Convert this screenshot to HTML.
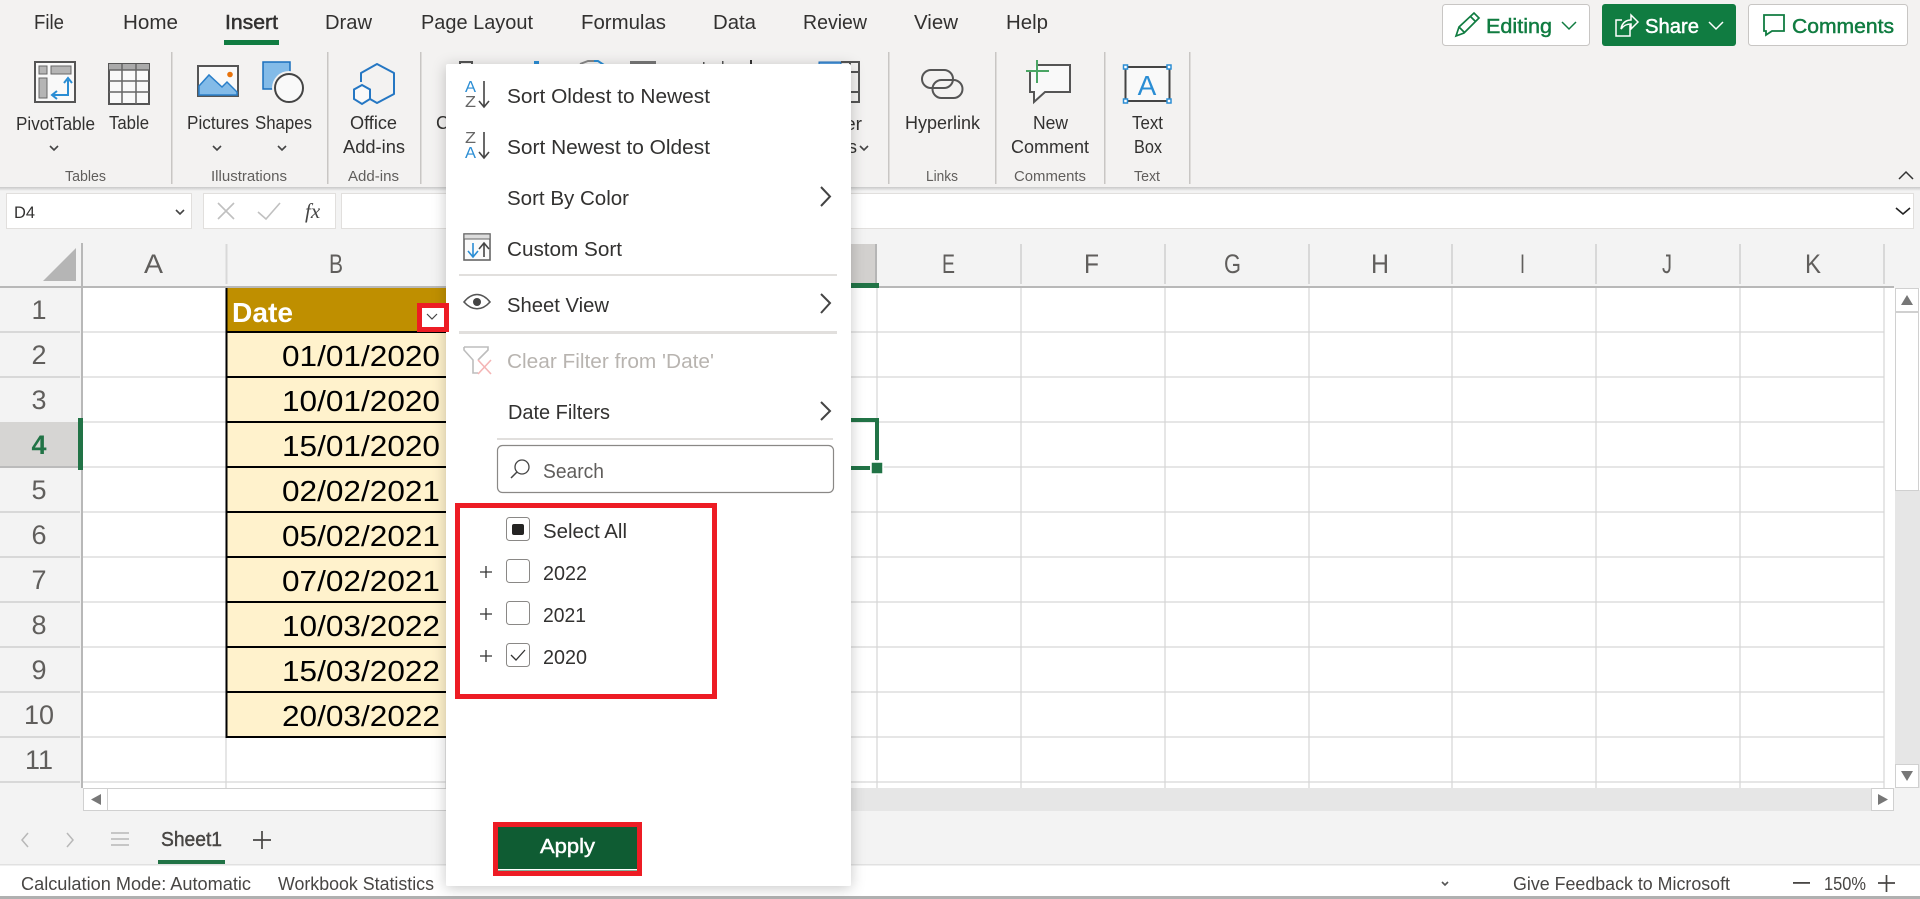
<!DOCTYPE html>
<html><head><meta charset="utf-8"><title>Excel</title>
<style>
html,body{margin:0;padding:0;width:1920px;height:899px;overflow:hidden;background:#f3f3f3}
svg{display:block;font-family:"Liberation Sans",sans-serif}
.t{font-size:20px;fill:#323130}
.r{font-size:18px;fill:#323130}
.g{font-size:15px;fill:#605e5c}
.m{font-size:20px;fill:#323130}
.h{font-size:27px;fill:#605e5c}
.d{font-size:29px;fill:#000}
.s{font-size:18px;fill:#484644}
.i{fill:none;stroke:#444;stroke-width:2}
</style></head><body>
<svg width="1920" height="899" viewBox="0 0 1920 899" xmlns="http://www.w3.org/2000/svg">
<defs>
<filter id="sh" x="-10%" y="-5%" width="120%" height="110%"><feDropShadow dx="0" dy="2" stdDeviation="7" flood-color="#000" flood-opacity=".22"/></filter>
<linearGradient id="rs" x1="0" y1="0" x2="0" y2="1"><stop offset="0" stop-color="#c9c9c9"/><stop offset="1" stop-color="#f3f3f3"/></linearGradient>
</defs>
<!-- ribbon -->
<rect width="1920" height="899" fill="#f3f3f3"/>
<rect width="1920" height="187" fill="#f3f2f1"/>
<rect y="187" width="1920" height="4" fill="url(#rs)"/>
<text class="t" x="34" y="29" textLength="30" lengthAdjust="spacingAndGlyphs">File</text>
<text class="t" x="123" y="29" textLength="55" lengthAdjust="spacingAndGlyphs">Home</text>
<text class="t" x="225" y="29" textLength="53" lengthAdjust="spacingAndGlyphs" stroke="#323130" stroke-width=".5">Insert</text>
<text class="t" x="325" y="29" textLength="47" lengthAdjust="spacingAndGlyphs">Draw</text>
<text class="t" x="421" y="29" textLength="112" lengthAdjust="spacingAndGlyphs">Page Layout</text>
<text class="t" x="581" y="29" textLength="85" lengthAdjust="spacingAndGlyphs">Formulas</text>
<text class="t" x="713" y="29" textLength="43" lengthAdjust="spacingAndGlyphs">Data</text>
<text class="t" x="803" y="29" textLength="64" lengthAdjust="spacingAndGlyphs">Review</text>
<text class="t" x="914" y="29" textLength="44" lengthAdjust="spacingAndGlyphs">View</text>
<text class="t" x="1006" y="29" textLength="42" lengthAdjust="spacingAndGlyphs">Help</text>
<rect x="224" y="40" width="55" height="5" fill="#107c41"/>
<!-- separators -->
<g fill="#c8c6c4"><rect x="171" y="52" width="1.5" height="132"/><rect x="327" y="52" width="1.5" height="132"/><rect x="420" y="52" width="1.5" height="132"/><rect x="888" y="52" width="1.5" height="132"/><rect x="995" y="52" width="1.5" height="132"/><rect x="1104" y="52" width="1.5" height="132"/><rect x="1189" y="52" width="1.5" height="132"/></g>
<!-- pivot icon -->
<rect x="35" y="62" width="40" height="40" fill="#f9f9f9" stroke="#555" stroke-width="2"/>
<g fill="#b5b5b5" stroke="#666"><rect x="39" y="66" width="8" height="8"/><rect x="51" y="66" width="20" height="8"/><rect x="39" y="78" width="8" height="20"/></g>
<path d="M68 80V95H53M64 83l4-5 4 5M57 91l-5 4 5 4" fill="none" stroke="#2a8dd4" stroke-width="2"/>
<text class="r" x="16" y="130" textLength="79" lengthAdjust="spacingAndGlyphs">PivotTable</text>
<path d="M50 146l4 4 4-4" fill="none" stroke="#444" stroke-width="1.6"/>
<!-- table icon -->
<rect x="109" y="64" width="40" height="40" fill="#f9f9f9" stroke="#555" stroke-width="2"/>
<rect x="109" y="64" width="40" height="6" fill="#aaa"/>
<path d="M122 64V104M136 64V104M109 70H149M109 81H149M109 92H149" stroke="#666" stroke-width="1.5"/>
<text class="r" x="109" y="129" textLength="40" lengthAdjust="spacingAndGlyphs">Table</text>
<text class="g" x="65" y="181" textLength="41" lengthAdjust="spacingAndGlyphs">Tables</text>
<!-- pictures icon -->
<rect x="198" y="66" width="40" height="30" fill="#f9f9f9" stroke="#555" stroke-width="2"/>
<path d="M199 86L209 75L222 87L227 82L237 92V95H199Z" fill="#83bbe8" stroke="#2a7fc9" stroke-width="1.5"/>
<circle cx="230" cy="74.500" r="2.800" fill="#e8730c"/>
<text class="r" x="187" y="129" textLength="62" lengthAdjust="spacingAndGlyphs">Pictures</text>
<path d="M213 146l4 4 4-4" fill="none" stroke="#444" stroke-width="1.6"/>
<!-- shapes icon -->
<rect x="263" y="62" width="27" height="27" fill="#83bbe8" stroke="#1a6fbe" stroke-width="1.5"/>
<circle cx="289" cy="88" r="17" fill="#f3f2f1"/>
<circle cx="289" cy="88" r="14" fill="#f9f9f9" stroke="#444" stroke-width="2"/>
<text class="r" x="255" y="129" textLength="57" lengthAdjust="spacingAndGlyphs">Shapes</text>
<path d="M278 146l4 4 4-4" fill="none" stroke="#444" stroke-width="1.6"/>
<text class="g" x="211" y="181" textLength="76" lengthAdjust="spacingAndGlyphs">Illustrations</text>
<!-- office add-ins -->
<path d="M361 82V73L377 64L394 73V94L377 103L370 99" fill="none" stroke="#2577c3" stroke-width="2" stroke-linejoin="round"/>
<path d="M362 85L370 89.500V99L362 104L354 99V89.500Z" fill="#f9f9f9" stroke="#2577c3" stroke-width="2"/>
<text class="r" x="350" y="129" textLength="47" lengthAdjust="spacingAndGlyphs">Office</text>
<text class="r" x="343" y="153" textLength="62" lengthAdjust="spacingAndGlyphs">Add-ins</text>
<text class="g" x="348" y="181" textLength="51" lengthAdjust="spacingAndGlyphs">Add-ins</text>
<text class="r" x="436" y="129">C</text>
<!-- peeking icons -->
<path d="M460 64V62H472V64" fill="none" stroke="#555" stroke-width="2"/>
<rect x="534" y="61" width="5" height="4" fill="#2a8dd4"/>
<path d="M580 64l8-3h6" fill="none" stroke="#888" stroke-width="2"/><path d="M594 61h4l6 4" fill="none" stroke="#2a8dd4" stroke-width="2"/>
<rect x="630" y="61" width="26" height="3" fill="#777"/><rect x="703" y="62" width="1.500" height="3" fill="#555"/><rect x="722" y="61" width="1.500" height="4" fill="#555"/><rect x="750" y="60" width="2" height="5" fill="#333"/>
<rect x="819" y="62" width="22" height="5" fill="#5da4e4" stroke="#1a6fbe"/>
<path d="M841 62H859V102H845M850 62V102M850 92H859M850 72H859" fill="none" stroke="#555" stroke-width="2"/>
<text class="r" x="845" y="130" textLength="17" lengthAdjust="spacingAndGlyphs">er</text>
<text class="r" x="848" y="153">s</text>
<path d="M860 146l4 4 4-4" fill="none" stroke="#444" stroke-width="1.6"/>
<!-- hyperlink -->
<rect x="922" y="70" width="31" height="18" rx="9" fill="none" stroke="#555" stroke-width="2"/>
<rect x="932.500" y="80" width="30" height="18" rx="9" fill="none" stroke="#555" stroke-width="2"/>
<text class="r" x="905" y="129" textLength="75" lengthAdjust="spacingAndGlyphs">Hyperlink</text>
<text class="g" x="926" y="181" textLength="32" lengthAdjust="spacingAndGlyphs">Links</text>
<!-- new comment -->
<path d="M1036 65H1070V92H1045L1034 102V92H1030V72" fill="#f9f9f9" stroke="#555" stroke-width="2"/>
<path d="M1026 71H1049M1037 60V83" stroke="#4aa564" stroke-width="2"/>
<text class="r" x="1033" y="129" textLength="35" lengthAdjust="spacingAndGlyphs">New</text>
<text class="r" x="1011" y="153" textLength="78" lengthAdjust="spacingAndGlyphs">Comment</text>
<text class="g" x="1014" y="181" textLength="72" lengthAdjust="spacingAndGlyphs">Comments</text>
<!-- textbox -->
<rect x="1125.500" y="67" width="44" height="34" fill="#f9f9f9" stroke="#444" stroke-width="2"/>
<g fill="#fff" stroke="#2a8dd4" stroke-width="1.500"><rect x="1123.500" y="65" width="4" height="4"/><rect x="1167" y="65" width="4" height="4"/><rect x="1123.500" y="99" width="4" height="4"/><rect x="1167" y="99" width="4" height="4"/></g>
<text x="1147" y="95" text-anchor="middle" font-size="28" fill="#2a8dd4">A</text>
<text class="r" x="1132" y="129" textLength="31" lengthAdjust="spacingAndGlyphs">Text</text>
<text class="r" x="1134" y="153" textLength="28" lengthAdjust="spacingAndGlyphs">Box</text>
<text class="g" x="1134" y="181" textLength="26" lengthAdjust="spacingAndGlyphs">Text</text>
<!-- top-right buttons -->
<rect x="1442.500" y="4.500" width="147" height="41" rx="3" fill="#fff" stroke="#c8c6c4"/>
<path d="M1456 36l3-9 15-14 5 5-15 15zM1459 27l6 6M1470 16l5 5" fill="none" stroke="#107c41" stroke-width="1.700"/>
<text x="1486" y="33" font-size="20" fill="#107c41" stroke="#107c41" stroke-width=".45" textLength="66" lengthAdjust="spacingAndGlyphs">Editing</text>
<path d="M1562 22l7 7 7-7" fill="none" stroke="#107c41" stroke-width="1.500"/>
<rect x="1602" y="4" width="134" height="42" rx="3" fill="#107c41"/>
<path d="M1630 25V36H1616V20H1622M1621 29c1-7 6-9 10-9V15l7 7-7 7v-5c-4 0-7 1-10 5z" fill="none" stroke="#fff" stroke-width="1.500"/>
<text x="1645" y="33" font-size="20" fill="#fff" stroke="#fff" stroke-width=".45" textLength="54" lengthAdjust="spacingAndGlyphs">Share</text>
<path d="M1709 22l7 7 7-7" fill="none" stroke="#fff" stroke-width="1.500"/>
<rect x="1748.500" y="4.500" width="159" height="41" rx="3" fill="#fff" stroke="#c8c6c4"/>
<path d="M1764 15H1784V31H1772L1766 35V31H1764Z" fill="none" stroke="#107c41" stroke-width="1.800"/>
<text x="1792" y="33" font-size="20" fill="#107c41" stroke="#107c41" stroke-width=".45" textLength="102" lengthAdjust="spacingAndGlyphs">Comments</text>
<path d="M1899 179l7-7 7 7" fill="none" stroke="#333" stroke-width="1.500"/>
<!-- formula bar -->
<g fill="#fff" stroke="#e1dfdd" stroke-width="1"><rect x="6.500" y="193.500" width="185" height="35"/><rect x="203.500" y="193.500" width="132" height="35"/><rect x="341.500" y="193.500" width="1572" height="35"/></g>
<text x="14" y="218" font-size="17" fill="#323130" textLength="21" lengthAdjust="spacingAndGlyphs">D4</text>
<path d="M176 210l4 4 4-4" fill="none" stroke="#444" stroke-width="1.600"/>
<path d="M218 203L234 219M234 203L218 219" stroke="#c0c0c0" stroke-width="1.600"/>
<path d="M258 212L266 219L280 203" fill="none" stroke="#c0c0c0" stroke-width="1.600"/>
<text x="305" y="218" font-family="Liberation Serif,serif" font-style="italic" font-size="21" fill="#444">fx</text>
<path d="M1896 208l7 6 7-6" fill="none" stroke="#222" stroke-width="1.600"/>
<!-- grid -->
<rect x="83" y="288" width="1811" height="500" fill="#fff"/>
<g stroke="#d6d6d6" stroke-width="1.200" fill="none">
<path d="M83 332H1884M83 377H1884M83 422H1884M83 467H1884M83 512H1884M83 557H1884M83 602H1884M83 647H1884M83 692H1884M83 737H1884M83 782H1884"/>
<path d="M226 288V788M446 288V788M733 288V788M877 288V788M1021 288V788M1165 288V788M1309 288V788M1452 288V788M1596 288V788M1740 288V788M1884 288V788"/>
</g>
<!-- col hdr -->
<rect x="0" y="286" width="1894" height="2" fill="#b8b8b8"/>
<rect x="0" y="288" width="81" height="500" fill="#f3f3f3"/>
<rect x="81" y="243" width="2" height="545" fill="#b8b8b8"/>
<path d="M43 281H76V248Z" fill="#b5b5b5"/>
<g fill="#d8d8d8"><rect x="225.500" y="244" width="2" height="40"/><rect x="1020" y="244" width="2" height="40"/><rect x="1164" y="244" width="2" height="40"/><rect x="1308" y="244" width="2" height="40"/><rect x="1451" y="244" width="2" height="40"/><rect x="1595" y="244" width="2" height="40"/><rect x="1739" y="244" width="2" height="40"/><rect x="1883" y="244" width="2" height="40"/></g>
<text class="h" x="144" y="273" textLength="19" lengthAdjust="spacingAndGlyphs">A</text>
<text class="h" x="329" y="273" textLength="14" lengthAdjust="spacingAndGlyphs">B</text>
<text class="h" x="942" y="273" textLength="13" lengthAdjust="spacingAndGlyphs">E</text>
<text class="h" x="1084" y="273" textLength="15" lengthAdjust="spacingAndGlyphs">F</text>
<text class="h" x="1224" y="273" textLength="17" lengthAdjust="spacingAndGlyphs">G</text>
<text class="h" x="1371" y="273" textLength="18" lengthAdjust="spacingAndGlyphs">H</text>
<text class="h" x="1520" y="273" textLength="5" lengthAdjust="spacingAndGlyphs">I</text>
<text class="h" x="1662" y="273" textLength="10" lengthAdjust="spacingAndGlyphs">J</text>
<text class="h" x="1805" y="273" textLength="16" lengthAdjust="spacingAndGlyphs">K</text>
<!-- row hdr -->
<g fill="#d8d8d8"><rect y="331" width="80" height="2"/><rect y="376" width="80" height="2"/><rect y="511" width="80" height="2"/><rect y="556" width="80" height="2"/><rect y="601" width="80" height="2"/><rect y="646" width="80" height="2"/><rect y="691" width="80" height="2"/><rect y="736" width="80" height="2"/><rect y="781" width="80" height="2"/></g>
<rect y="422" width="81" height="45" fill="#d6d5d3"/><rect y="466" width="81" height="2" fill="#bbb"/>
<g class="h" text-anchor="middle" font-size="27" fill="#605e5c">
<text x="39" y="319">1</text><text x="39" y="364">2</text><text x="39" y="409">3</text><text x="39" y="499">5</text><text x="39" y="544">6</text><text x="39" y="589">7</text><text x="39" y="634">8</text><text x="39" y="679">9</text><text x="39" y="724">10</text><text x="39" y="769">11</text>
</g>
<text x="39" y="454" text-anchor="middle" font-size="27" font-weight="bold" fill="#217346">4</text>
<rect x="78" y="418" width="5" height="52" fill="#217346"/>
<!-- table -->
<rect x="226" y="288" width="225" height="44" fill="#bf8f00"/>
<rect x="226" y="333" width="225" height="405" fill="#fff2cc"/>
<g fill="#000"><rect x="225.500" y="288" width="2" height="450"/>
<rect x="226" y="331" width="225" height="2"/><rect x="226" y="376" width="225" height="2"/><rect x="226" y="421" width="225" height="2"/><rect x="226" y="466" width="225" height="2"/><rect x="226" y="511" width="225" height="2"/><rect x="226" y="556" width="225" height="2"/><rect x="226" y="601" width="225" height="2"/><rect x="226" y="646" width="225" height="2"/><rect x="226" y="691" width="225" height="2"/><rect x="226" y="736" width="225" height="2"/></g>
<text x="232" y="322" font-size="28" font-weight="bold" fill="#fff" textLength="61" lengthAdjust="spacingAndGlyphs">Date</text>
<text class="d" x="282" y="366" textLength="158" lengthAdjust="spacingAndGlyphs">01/01/2020</text>
<text class="d" x="282" y="411" textLength="158" lengthAdjust="spacingAndGlyphs">10/01/2020</text>
<text class="d" x="282" y="456" textLength="158" lengthAdjust="spacingAndGlyphs">15/01/2020</text>
<text class="d" x="282" y="501" textLength="158" lengthAdjust="spacingAndGlyphs">02/02/2021</text>
<text class="d" x="282" y="546" textLength="158" lengthAdjust="spacingAndGlyphs">05/02/2021</text>
<text class="d" x="282" y="591" textLength="158" lengthAdjust="spacingAndGlyphs">07/02/2021</text>
<text class="d" x="282" y="636" textLength="158" lengthAdjust="spacingAndGlyphs">10/03/2022</text>
<text class="d" x="282" y="681" textLength="158" lengthAdjust="spacingAndGlyphs">15/03/2022</text>
<text class="d" x="282" y="726" textLength="158" lengthAdjust="spacingAndGlyphs">20/03/2022</text>
<!-- D selection -->
<rect x="733" y="244" width="144" height="41" fill="#d2d0ce"/><rect x="875" y="244" width="2" height="41" fill="#b5b5b5"/><rect x="733" y="283" width="146" height="5" fill="#217346"/>
<path d="M733 420H877V460M733 468H870" fill="none" stroke="#217346" stroke-width="4"/>
<rect x="871" y="462" width="12" height="12" fill="#217346" stroke="#fff" stroke-width="1.500"/>
<!-- scrollbars -->
<rect x="1894" y="288" width="26" height="500" fill="#fff"/>
<rect x="1895" y="490" width="25" height="298" fill="#e6e6e6"/>
<rect x="1895.500" y="288.500" width="23" height="23" fill="#fff" stroke="#d0d0d0"/>
<rect x="1895.500" y="312.500" width="23" height="178" fill="#fff" stroke="#d0d0d0"/>
<path d="M1901 305H1913L1907 295Z" fill="#777"/>
<rect x="1895.500" y="764.500" width="23" height="23" fill="#fff" stroke="#d0d0d0"/>
<path d="M1901 771H1913L1907 781Z" fill="#777"/>
<rect x="83" y="788" width="1811" height="23" fill="#e6e6e6"/>
<rect x="83.500" y="788.500" width="760" height="22" fill="#fff" stroke="#d0d0d0"/>
<rect x="83.500" y="788.500" width="24" height="22" fill="#fff" stroke="#d0d0d0"/>
<path d="M101 794V805L91 799.500Z" fill="#777"/>
<rect x="1871.500" y="788.500" width="22" height="22" fill="#fff" stroke="#d0d0d0"/>
<path d="M1878 794V805L1888 799.500Z" fill="#777"/>
<!-- tabs -->
<path d="M28 833L22 840L28 847M67 833L73 840L67 847" fill="none" stroke="#b8b8b8" stroke-width="1.500"/>
<path d="M111 833H129M111 839H129M111 845H129" stroke="#b8b8b8" stroke-width="1.500"/>
<text x="161" y="846" font-size="20" fill="#484644" stroke="#484644" stroke-width=".45" textLength="61" lengthAdjust="spacingAndGlyphs">Sheet1</text>
<rect x="158" y="860" width="67" height="4" fill="#217346"/>
<path d="M253 840H271M262 831V849" stroke="#484644" stroke-width="1.700"/>
<!-- status -->
<rect y="864" width="1920" height="32" fill="#fff"/><rect y="864" width="1920" height="1.500" fill="#e1e1e1"/>
<rect y="896" width="1920" height="3" fill="#b0b0b0"/>
<text class="s" x="21" y="890" textLength="230" lengthAdjust="spacingAndGlyphs">Calculation Mode: Automatic</text>
<text class="s" x="278" y="890" textLength="156" lengthAdjust="spacingAndGlyphs">Workbook Statistics</text>
<path d="M1442 882l3 3 3-3" fill="none" stroke="#555" stroke-width="1.600"/>
<text class="s" x="1513" y="890" textLength="217" lengthAdjust="spacingAndGlyphs">Give Feedback to Microsoft</text>
<rect x="1793" y="882" width="17" height="1.800" fill="#484644"/>
<text class="s" x="1824" y="890" textLength="42" lengthAdjust="spacingAndGlyphs">150%</text>
<path d="M1878 883H1895M1886.500 875V892" stroke="#484644" stroke-width="1.700"/>
<!-- menu -->
<rect x="446" y="64" width="405" height="822" rx="2" fill="#fff" filter="url(#sh)"/>
<text x="465" y="92" font-size="16" fill="#2a8dd4" textLength="11" lengthAdjust="spacingAndGlyphs">A</text>
<text x="465" y="107" font-size="16" fill="#666" textLength="11" lengthAdjust="spacingAndGlyphs">Z</text>
<path d="M484 81V107M479 101L484 107L489 101" fill="none" stroke="#444" stroke-width="1.600"/>
<text class="m" x="507" y="103" textLength="203" lengthAdjust="spacingAndGlyphs">Sort Oldest to Newest</text>
<text x="465" y="143" font-size="16" fill="#666" textLength="11" lengthAdjust="spacingAndGlyphs">Z</text>
<text x="465" y="158" font-size="16" fill="#2a8dd4" textLength="11" lengthAdjust="spacingAndGlyphs">A</text>
<path d="M484 132V158M479 152L484 158L489 152" fill="none" stroke="#444" stroke-width="1.600"/>
<text class="m" x="507" y="154" textLength="203" lengthAdjust="spacingAndGlyphs">Sort Newest to Oldest</text>
<text class="m" x="507" y="205" textLength="122" lengthAdjust="spacingAndGlyphs">Sort By Color</text>
<path d="M821 187L830 196.500L821 206" fill="none" stroke="#444" stroke-width="2"/>
<rect x="464" y="234" width="26" height="26" fill="#fafafa" stroke="#666" stroke-width="1.600"/><rect x="464" y="234" width="26" height="5" fill="#ddd" stroke="#666"/>
<path d="M473 243V256M468 251L473 257L478 251" fill="none" stroke="#2a8dd4" stroke-width="1.600"/>
<path d="M484 257V243M479 249L484 243L489 249" fill="none" stroke="#444" stroke-width="1.600"/>
<text class="m" x="507" y="256" textLength="115" lengthAdjust="spacingAndGlyphs">Custom Sort</text>
<rect x="459" y="274" width="378" height="2" fill="#e1dfdd"/>
<path d="M464 302C472 292 482 292 490 302C482 311 472 311 464 302Z" fill="none" stroke="#555" stroke-width="1.600"/>
<circle cx="477" cy="302" r="4" fill="#444"/>
<text class="m" x="507" y="312" textLength="102" lengthAdjust="spacingAndGlyphs">Sheet View</text>
<path d="M821 294L830 303L821 313" fill="none" stroke="#444" stroke-width="2"/>
<rect x="459" y="331" width="378" height="3" fill="#e1dfdd"/>
<path d="M464 347H488V350L478 360M464 347V350L473 360V373H478" fill="none" stroke="#bdbdbd" stroke-width="1.600"/>
<path d="M478 360L491 374M491 360L478 374" stroke="#f4b5b5" stroke-width="1.600"/>
<text x="507" y="368" font-size="20" fill="#b8b4b0" textLength="207" lengthAdjust="spacingAndGlyphs">Clear Filter from 'Date'</text>
<text class="m" x="508" y="419" textLength="102" lengthAdjust="spacingAndGlyphs">Date Filters</text>
<path d="M821 402L830 411L821 420" fill="none" stroke="#444" stroke-width="2"/>
<rect x="497" y="438" width="336" height="2" fill="#e1dfdd"/>
<rect x="497.500" y="445.500" width="336" height="47" rx="5" fill="#fff" stroke="#8a8886" stroke-width="1.200"/>
<circle cx="522" cy="467" r="7" fill="none" stroke="#444" stroke-width="1.300"/><path d="M517 472L511 478" stroke="#444" stroke-width="1.500"/>
<text x="543" y="478" font-size="20" fill="#605e5c" textLength="61" lengthAdjust="spacingAndGlyphs">Search</text>
<g fill="#fff" stroke="#8a8886" stroke-width="1"><rect x="506.500" y="517.500" width="23" height="23" rx="3"/><rect x="506.500" y="559.500" width="23" height="23" rx="3"/><rect x="506.500" y="601.500" width="23" height="23" rx="3"/><rect x="506.500" y="643.500" width="23" height="23" rx="3"/></g>
<rect x="512" y="524" width="12" height="11" rx="2" fill="#252423"/>
<path d="M511 655L516 660L525 650" fill="none" stroke="#333" stroke-width="1.300"/>
<path d="M480 572H492M486 566V578M480 614H492M486 608V620M480 656H492M486 650V662" stroke="#333" stroke-width="1.300"/>
<text class="m" x="543" y="538" textLength="84" lengthAdjust="spacingAndGlyphs">Select All</text>
<text class="m" x="543" y="580" textLength="44" lengthAdjust="spacingAndGlyphs">2022</text>
<text class="m" x="543" y="622" textLength="43" lengthAdjust="spacingAndGlyphs">2021</text>
<text class="m" x="543" y="664" textLength="44" lengthAdjust="spacingAndGlyphs">2020</text>
<!-- red boxes -->
<rect x="419.500" y="305.500" width="27" height="24" fill="#fff" stroke="#ed1c24" stroke-width="5"/>
<path d="M427 314l5 5 5-5" fill="none" stroke="#444" stroke-width="1.200"/>
<rect x="457.500" y="505.500" width="257" height="191" fill="none" stroke="#ed1c24" stroke-width="5"/>
<rect x="495.500" y="824.500" width="144" height="49" fill="#0f5c33" stroke="#ed1c24" stroke-width="5"/>
<rect x="498" y="869" width="139" height="1.500" fill="#fff"/>
<text x="540" y="853" font-size="20" fill="#fff" stroke="#fff" stroke-width=".45" textLength="55" lengthAdjust="spacingAndGlyphs">Apply</text>
</svg>
</body></html>
